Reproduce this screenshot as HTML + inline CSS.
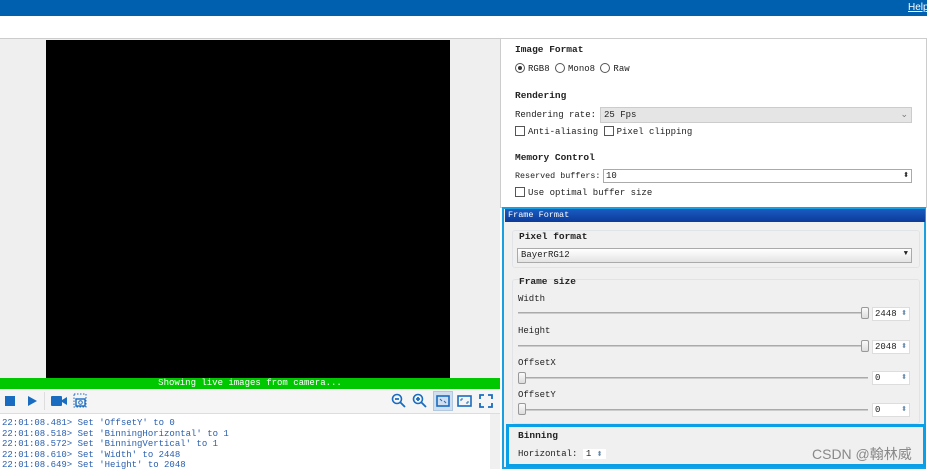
<!DOCTYPE html>
<html><head><meta charset="utf-8"><style>
*{margin:0;padding:0;box-sizing:border-box}
body{width:927px;height:469px;overflow:hidden;background:#fff;position:relative;font-family:"Liberation Mono","Noto Sans CJK SC",monospace;font-size:9px;color:#222}
.a{position:absolute}
.b{font-weight:bold;font-size:9.5px}
.cb{display:inline-block;width:10px;height:10px;border:1px solid #555;background:#fff;vertical-align:-2px;margin-right:3px}
.rd{display:inline-block;width:10px;height:10px;border:1px solid #555;border-radius:50%;background:#fff;vertical-align:-2px;margin-right:3px;position:relative}
.track{height:2px;background:#ccc;border-top:1px solid #aaa}
.thumb{width:8px;height:12px;background:linear-gradient(#fafafa,#ddd);border:1px solid #999;border-radius:2px}
.spin{width:38px;height:14px;background:#fff;border:1px solid #ddd;font-size:9px;padding:1px 2px;line-height:11px}
.grp{border:1px solid #e0e4e8;border-radius:3px}
</style></head><body>
<div class="a" style="left:0;top:0;width:927px;height:16px;background:#0060b0"></div>
<div class="a" style="left:908px;top:2px;color:#fff;font-family:'Liberation Sans',sans-serif;font-size:10px;text-decoration:underline">Help</div>
<div class="a" style="left:0;top:38px;width:500px;height:340px;background:#efefef;border-top:1px solid #ccc"></div>
<div class="a" style="left:46px;top:40px;width:404px;height:338px;background:#000"></div>
<div class="a" style="left:500px;top:38px;width:427px;height:170px;background:#fff;border:1px solid #ccc"></div>
<div class="a b" style="left:515px;top:44px">Image Format</div>
<div class="a" style="left:515px;top:63px"><span class="rd"><span class="a" style="left:2px;top:2px;width:4px;height:4px;border-radius:50%;background:#333"></span></span>RGB8 <span class="rd"></span>Mono8 <span class="rd"></span>Raw</div>
<div class="a b" style="left:515px;top:90px">Rendering</div>
<div class="a" style="left:515px;top:110px">Rendering rate:</div>
<div class="a" style="left:600px;top:107px;width:312px;height:16px;background:#e5e5e5;border:1px solid #ccc;padding:2px 3px">25 Fps<span style="float:right;color:#777">⌄</span></div>
<div class="a" style="left:515px;top:126px"><span class="cb"></span>Anti-aliasing <span class="cb"></span>Pixel clipping</div>
<div class="a b" style="left:515px;top:152px">Memory Control</div>
<div class="a" style="left:515px;top:171px;font-size:8.4px">Reserved buffers:</div>
<div class="a" style="left:603px;top:169px;width:309px;height:14px;border:1px solid #aaa;padding:1px 2px">10<span style="float:right;font-size:7px">⬍</span></div>
<div class="a" style="left:515px;top:187px"><span class="cb"></span>Use optimal buffer size</div>
<div class="a" style="left:502px;top:207px;width:424px;height:262px;background:#f0f0f0;border:2px solid #1aa0e0"></div>
<div class="a" style="left:505px;top:209px;width:420px;height:13px;background:linear-gradient(#1a5cc0,#0b3a9a);color:#fff;font-size:8.5px;padding:1px 3px">Frame Format</div>
<div class="a grp" style="left:512px;top:230px;width:408px;height:38px"></div>
<div class="a b" style="left:519px;top:231px">Pixel format</div>
<div class="a" style="left:517px;top:248px;width:395px;height:15px;background:linear-gradient(#fff,#e4e4e4);border:1px solid #aaa;padding:1px 3px">BayerRG12<span style="float:right;font-size:7px">▼</span></div>
<div class="a grp" style="left:512px;top:279px;width:408px;height:145px"></div>
<div class="a b" style="left:519px;top:276px">Frame size</div>
<div class="a" style="left:518px;top:294px">Width</div>
<div class="a track" style="left:518px;top:312px;width:350px"></div>
<div class="a thumb" style="left:861px;top:307px"></div>
<div class="a spin" style="left:872px;top:307px">2448<span style="float:right;color:#68a;font-size:7px">⬍</span></div>
<div class="a" style="left:518px;top:326px">Height</div>
<div class="a track" style="left:518px;top:345px;width:350px"></div>
<div class="a thumb" style="left:861px;top:340px"></div>
<div class="a spin" style="left:872px;top:340px">2048<span style="float:right;color:#68a;font-size:7px">⬍</span></div>
<div class="a" style="left:518px;top:358px">OffsetX</div>
<div class="a track" style="left:518px;top:377px;width:350px"></div>
<div class="a thumb" style="left:518px;top:372px"></div>
<div class="a spin" style="left:872px;top:371px">0<span style="float:right;color:#68a;font-size:7px">⬍</span></div>
<div class="a" style="left:518px;top:390px">OffsetY</div>
<div class="a track" style="left:518px;top:409px;width:350px"></div>
<div class="a thumb" style="left:518px;top:403px"></div>
<div class="a spin" style="left:872px;top:403px">0<span style="float:right;color:#68a;font-size:7px">⬍</span></div>
<div class="a" style="left:506px;top:424px;width:420px;height:43px;border:3px solid #0aa0e8"></div>
<div class="a b" style="left:518px;top:430px">Binning</div>
<div class="a" style="left:518px;top:449px">Horizontal: <span style="background:#fff;padding:0 3px">1 <span style="color:#68a;font-size:7px">⬍</span></span></div>
<div class="a" style="left:812px;top:444px;font-family:'Liberation Sans','Noto Sans CJK SC',sans-serif;font-size:14px;color:#888">CSDN @翰林威</div>
<div class="a" style="left:0;top:378px;width:500px;height:11px;background:#00c800;color:#fff;text-align:center;font-size:9px;line-height:11px">Showing live images from camera...</div>
<div class="a" style="left:0;top:389px;width:500px;height:24px;background:#f5f5f5"></div>
<div class="a" style="left:5px;top:396px;width:10px;height:10px;background:#1a6cc0"></div>
<svg class="a" style="left:26px;top:395px" width="12" height="12"><path d="M2 1L11 6L2 11Z" fill="#1a6cc0"/></svg>
<div class="a" style="left:44px;top:392px;width:1px;height:18px;background:#ddd"></div>
<svg class="a" style="left:51px;top:395px" width="16" height="12"><rect x="0" y="1" width="11" height="10" rx="1" fill="#1a6cc0"/><path d="M11 5L16 2V10L11 7Z" fill="#1a6cc0"/></svg>
<svg class="a" style="left:73px;top:393px" width="14" height="15"><rect x="1" y="1" width="12" height="13" fill="none" stroke="#1a6cc0" stroke-dasharray="1.5 1.5"/><rect x="3" y="6" width="9" height="7" fill="none" stroke="#1a6cc0" stroke-width="1.4"/><circle cx="7.5" cy="9.5" r="1.8" fill="none" stroke="#1a6cc0"/></svg>
<svg class="a" style="left:391px;top:393px" width="16" height="16"><circle cx="6" cy="6" r="4.5" fill="none" stroke="#1a6cc0" stroke-width="1.6"/><path d="M4 6H8M9.5 9.5L14 14" stroke="#1a6cc0" stroke-width="1.8"/></svg>
<svg class="a" style="left:412px;top:393px" width="16" height="16"><circle cx="6" cy="6" r="4.5" fill="none" stroke="#1a6cc0" stroke-width="1.6"/><path d="M4 6H8M6 4V8M9.5 9.5L14 14" stroke="#1a6cc0" stroke-width="1.8"/></svg>
<div class="a" style="left:433px;top:391px;width:20px;height:20px;background:#d0dff0;border:1px solid #b0c8e0"></div>
<svg class="a" style="left:436px;top:395px" width="14" height="12"><rect x="1" y="1" width="12" height="10" fill="none" stroke="#1a6cc0" stroke-width="1.6"/><path d="M4 4L6 6M10 8L8 6" stroke="#1a6cc0"/></svg>
<svg class="a" style="left:457px;top:395px" width="15" height="12"><rect x="1" y="1" width="13" height="10" fill="none" stroke="#1a6cc0" stroke-width="1.6"/><path d="M4 4H6M4 4V6M11 8H9M11 8V6" stroke="#1a6cc0"/></svg>
<svg class="a" style="left:479px;top:394px" width="14" height="14"><path d="M1 5V1H5M9 1H13V5M13 9V13H9M5 13H1V9" fill="none" stroke="#1a6cc0" stroke-width="1.8"/></svg>
<div class="a" style="left:0;top:413px;width:500px;height:56px;background:#fff;border-top:1px solid #ddd"></div>
<div class="a" style="left:2px;top:418px;color:#2a60b0;font-size:9px;line-height:10.5px;white-space:pre">22:01:08.481> Set 'OffsetY' to 0
22:01:08.518> Set 'BinningHorizontal' to 1
22:01:08.572> Set 'BinningVertical' to 1
22:01:08.610> Set 'Width' to 2448
22:01:08.649> Set 'Height' to 2048</div>
<div class="a" style="left:490px;top:414px;width:10px;height:55px;background:#f0f0f0"></div>
</body></html>
